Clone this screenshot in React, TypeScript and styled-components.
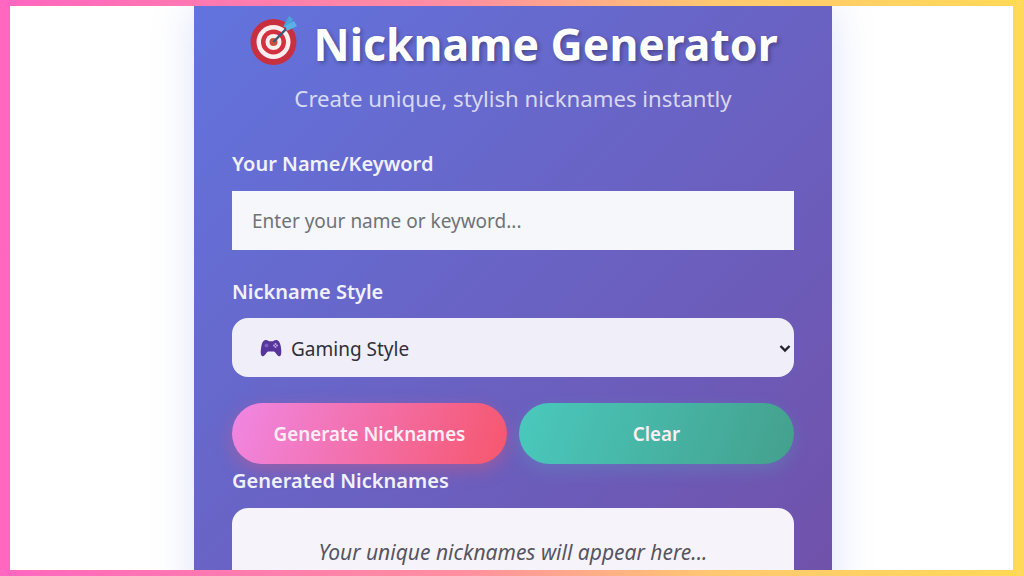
import React from "react";
import styled, { createGlobalStyle } from "styled-components";

const Global = createGlobalStyle`
  html, body { margin: 0; padding: 0; background: #fff; }
  #root { width: 1024px; height: 576px; overflow: hidden; }
  * { box-sizing: border-box; }
`;

const Frame = styled.div`
  width: 1024px;
  height: 576px;
  padding: 6px 11px 6px 10px;
  background: linear-gradient(90deg, #ff66c0 0%, #ff8fa0 45%, #ffc870 70%, #ffd957 100%);
  font-family: "Noto Sans", "Open Sans", sans-serif;
`;

const Sheet = styled.div`
  height: 564px;
  background: #fff;
  overflow: hidden;
  padding-left: 184px;
`;

const Card = styled.main`
  width: 638px;
  height: 620px;
  padding: 13px 38px 0;
  background: linear-gradient(135deg, #6274de 0%, #7150a8 100%);
  box-shadow: 0 0 40px rgba(102, 126, 234, 0.22);
`;

const Title = styled.h1`
  margin: 0;
  display: flex;
  justify-content: center;
  align-items: center;
  gap: 15px;
  height: 50px;
  font-size: 44.5px;
  line-height: 50px;
  font-weight: 700;
  color: #fff;
  text-shadow: 2px 2px 4px rgba(0, 0, 0, 0.3);
  white-space: nowrap;
`;

const Subtitle = styled.p`
  margin: 15px 0 0;
  height: 30px;
  text-align: center;
  font-size: 22.2px;
  line-height: 30px;
  color: rgba(255, 255, 255, 0.75);
  white-space: nowrap;
`;

const Label = styled.label`
  display: block;
  font-size: 20px;
  line-height: 28px;
  font-weight: 600;
  color: #f1f1fd;
  white-space: nowrap;
`;

const NameLabel = styled(Label)`
  margin-top: 36px;
`;

const StyleLabel = styled(Label)`
  margin-top: 28px;
`;

const ResultLabel = styled(Label)`
  margin-top: 3px;
`;

const TextInput = styled.input`
  display: block;
  width: 100%;
  height: 59px;
  margin-top: 13px;
  padding: 0 20px;
  border: 0;
  border-radius: 0;
  outline: 0;
  background: #f5f7fb;
  font: 400 19px "Noto Sans", sans-serif;
  color: #333;
  &::placeholder { color: #6f7378; opacity: 1; }
`;

const SelectBox = styled.div`
  display: flex;
  align-items: center;
  gap: 9px;
  height: 59px;
  margin-top: 12px;
  padding: 2px 3px 0 28px;
  border-radius: 16px;
  background: #f0eef9;
  font-size: 19px;
  color: #2f2f3a;
`;

const SelectText = styled.span`
  flex: 1;
`;

const Buttons = styled.div`
  display: grid;
  grid-template-columns: 1fr 1fr;
  gap: 12px;
  margin-top: 26px;
`;

const Button = styled.button<{ $from: string; $to: string; $shadow: string }>`
  height: 61px;
  border: 0;
  border-radius: 31px;
  background: linear-gradient(110deg, ${(p) => p.$from}, ${(p) => p.$to});
  box-shadow: 0 6px 18px ${(p) => p.$shadow};
  color: #fdeef6;
  font: 600 18.8px "Noto Sans", sans-serif;
`;

const Output = styled.section`
  height: 120px;
  margin-top: 13px;
  padding-top: 29px;
  border-radius: 16px;
  background: #f6f3fb;
  text-align: center;
  font-size: 21px;
  line-height: 30px;
  font-style: italic;
  color: #555560;
`;

const TargetSvg = styled.svg`
  overflow: visible;
`;

const TargetIcon = () => (
  <TargetSvg width="50" height="50" viewBox="-2 0 50 50" aria-hidden="true">
    <circle cx="23.5" cy="23" r="23" fill="#c9303f" />
    <path d="M40 7A23 23 0 0 1 7 39 23 23 0 0 0 40 7Z" fill="#a82a36" />
    <circle cx="23.5" cy="23" r="17" fill="#fbeeee" />
    <circle cx="23.5" cy="23" r="12.5" fill="#d2313f" />
    <circle cx="23.5" cy="23" r="8" fill="#fbeeee" />
    <circle cx="23.5" cy="23" r="4" fill="#c9503f" />
    <path d="M23.5 23 37 9" stroke="#37597a" strokeWidth="2.5" />
    <path d="M33 8 39 -3l4 3-4 8Z" fill="#4aa3dc" />
    <path d="M37 12l10-5-3-5-9 5Z" fill="#58b2e6" />
  </TargetSvg>
);

const PadIcon = () => (
  <svg width="22" height="19" viewBox="0 0 22 19" aria-hidden="true">
    <path
      d="M6 1c1.600 0 2.400 1.200 3.200 1.200h3.600c.8 0 1.600-1.200 3.200-1.200 2.600 0 3.900 2.400 4.600 5.600.7 3.500 1.400 9-.4 10.400-1.700 1.200-3.400-1.400-4.700-3.200-.7-1-1.300-1.300-2.400-1.300H9c-1.100 0-1.700.3-2.400 1.300C5.300 15.600 3.600 18.200 1.900 17 .1 15.600.8 10.100 1.500 6.600 2.200 3.400 3.400 1 6 1Z"
      fill="#56369a"
    />
    <circle cx="6.500" cy="6.500" r="2" fill="#7d5fc0" />
    <circle cx="15.500" cy="5" r="1" fill="#b9a6e6" />
    <circle cx="15.500" cy="8" r="1" fill="#b9a6e6" />
    <circle cx="14" cy="6.500" r="1" fill="#b9a6e6" />
    <circle cx="17" cy="6.500" r="1" fill="#b9a6e6" />
  </svg>
);

const Chevron = () => (
  <svg width="12" height="9" viewBox="0 0 12 9" aria-hidden="true">
    <path d="M1.500 2 6 6.500 10.500 2" fill="none" stroke="#22222a" strokeWidth="2.4" />
  </svg>
);

export default function App() {
  return (
    <Frame>
      <Global />
      <Sheet>
        <Card>
          <Title>
            <TargetIcon />
            <span>Nickname Generator</span>
          </Title>
          <Subtitle>Create unique, stylish nicknames instantly</Subtitle>
          <NameLabel htmlFor="name">Your Name/Keyword</NameLabel>
          <TextInput id="name" placeholder="Enter your name or keyword..." />
          <StyleLabel>Nickname Style</StyleLabel>
          <SelectBox>
            <PadIcon />
            <SelectText>Gaming Style</SelectText>
            <Chevron />
          </SelectBox>
          <Buttons>
            <Button $from="#f087e4" $to="#f6566c" $shadow="rgba(245, 87, 108, 0.35)">
              Generate Nicknames
            </Button>
            <Button $from="#4ac9bd" $to="#44a08d" $shadow="rgba(78, 205, 196, 0.2)">
              Clear
            </Button>
          </Buttons>
          <ResultLabel>Generated Nicknames</ResultLabel>
          <Output>Your unique nicknames will appear here...</Output>
        </Card>
      </Sheet>
    </Frame>
  );
}
